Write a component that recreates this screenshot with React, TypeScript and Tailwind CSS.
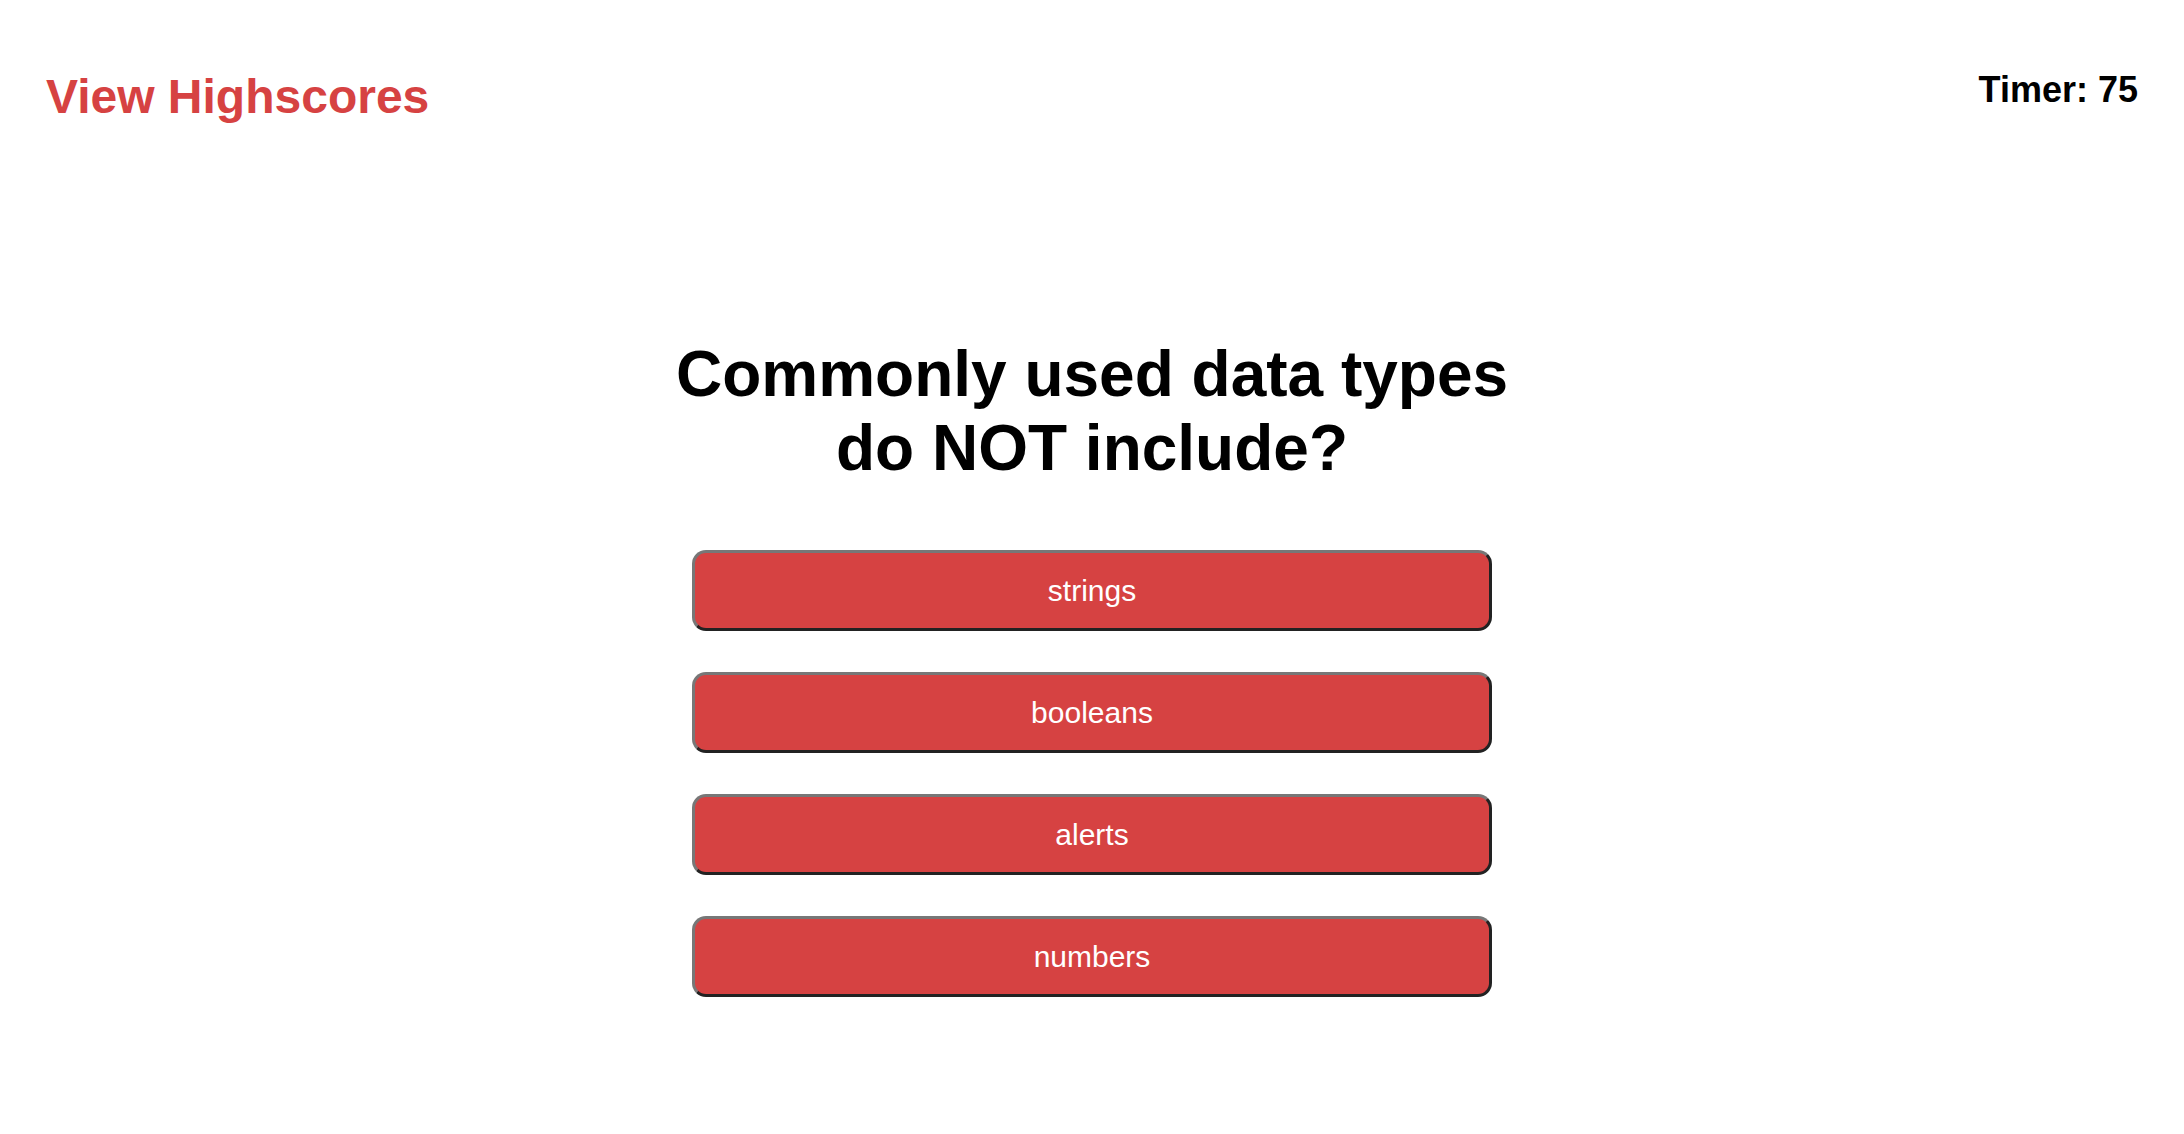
const choices = ["strings", "booleans", "alerts", "numbers"];

export default function App() {
  return (
    <div className="min-h-screen bg-white font-['Liberation_Sans',Arial,sans-serif]">
      {/* Header */}
      <header className="flex items-start justify-between px-[46px] pt-[69px]">
        <a href="#" className="text-[48px] font-bold leading-[55px] text-[#d64242]">
          View Highscores
        </a>
        <p className="text-[36px] font-bold leading-[41px] text-black">Timer: 75</p>
      </header>

      {/* Question */}
      <main className="mt-[214px] flex flex-col items-center">
        <h1 className="max-w-[900px] text-center text-[64px] font-bold leading-[73.6px] text-black">
          Commonly used data types do NOT include?
        </h1>
        <div className="mt-[65px] flex w-[800px] flex-col gap-[41px]">
          {choices.map((choice) => (
            <button
              key={choice}
              className="h-[81px] w-full rounded-[14px] border-[3px] border-t-[#777777] border-l-[#777777] border-b-[#222222] border-r-[#222222] bg-[#d64242] text-[30px] text-white"
            >
              {choice}
            </button>
          ))}
        </div>
      </main>
    </div>
  );
}
